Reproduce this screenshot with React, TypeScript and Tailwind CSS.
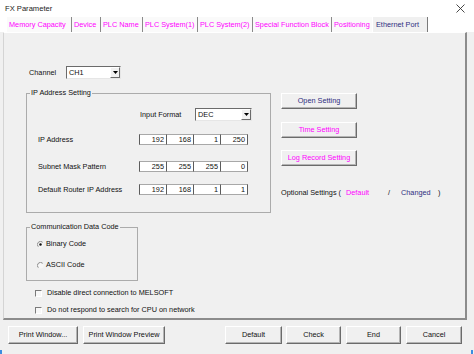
import React from "react";

type Kids = { children?: React.ReactNode; className?: string };

const Btn = ({ children, className = "" }: Kids) => (
  <div
    className={`flex items-center justify-center border border-t-white border-l-white border-r-[#6b6b6b] border-b-[#6b6b6b] bg-[#f0f0f0] leading-[10px] shadow-[inset_-1px_-1px_0_#b4b4b4] ${className}`}
  >
    {children}
  </div>
);

const Combo = ({ value, className = "" }: { value: string; className?: string }) => (
  <div
    className={`flex h-[13px] items-stretch border border-t-[#6b6b6b] border-l-[#6b6b6b] border-r-[#e6e6e6] border-b-[#e6e6e6] bg-white ${className}`}
  >
    <span className="flex-1 pl-[2px] leading-[11px]">{value}</span>
    <span className="flex w-[10px] items-center justify-center border border-t-white border-l-white border-r-[#6b6b6b] border-b-[#6b6b6b] bg-[#f0f0f0]">
      <svg width="5" height="3" viewBox="0 0 5 3">
        <path d="M0 0h5L2.5 3z" fill="#000" />
      </svg>
    </span>
  </div>
);

const IpField = ({ label, parts }: { label: string; parts: string[] }) => (
  <div className="flex h-[11px] items-center pl-[11px]">
    <span className="w-[101px] leading-[10px]">{label}</span>
    <div className="flex">
      {parts.map((p, i) => (
        <span
          key={i}
          className="-ml-px h-[11px] w-[28px] border border-t-[#a8a8a8] border-b-[#a8a8a8] border-l-[#5c5c5c] border-r-[#5c5c5c] bg-white pr-[2px] text-right leading-[9px] first:ml-0"
        >
          {p}
        </span>
      ))}
    </div>
  </div>
);

const Radio = ({ checked, label }: { checked?: boolean; label: string }) => (
  <div className="flex h-[10px] items-center gap-[2px] pl-[10px]">
    <svg width="7" height="7" viewBox="0 0 8 8">
      <circle cx="4" cy="4" r="3.5" fill="#f7f7f7" />
      <path d="M1.5 6.5A3.5 3.5 0 0 1 6.5 1.5" fill="none" stroke="#7a7a7a" strokeWidth="1" />
      {checked && <circle cx="4" cy="4" r="1.4" fill="#111" />}
    </svg>
    <span className="leading-[10px]">{label}</span>
  </div>
);

const Check = ({ label, className = "" }: { label: string; className?: string }) => (
  <div className={`flex h-[10px] items-center gap-[5px] pl-[9px] ${className}`}>
    <span className="h-[7px] w-[7px] border border-t-[#7a7a7a] border-l-[#7a7a7a] border-r-white border-b-white bg-[#f7f7f7]" />
    <span className="leading-[10px]">{label}</span>
  </div>
);

const tabs = [
  { label: "Memory Capacity", w: "w-[65px]" },
  { label: "Device", w: "w-[29px]" },
  { label: "PLC Name", w: "w-[42px]" },
  { label: "PLC System(1)", w: "w-[55px]" },
  { label: "PLC System(2)", w: "w-[55px]" },
  { label: "Special Function Block", w: "w-[79px]" },
];

export default function App() {
  return (
    <div className="flex h-[354px] w-[474px] flex-col overflow-hidden bg-[#f0f0f0] font-['Liberation_Sans',Arial,sans-serif] text-[7.3px] text-[#111]">
      {/* title bar */}
      <div className="flex h-[17px] items-center justify-between bg-white pl-[5px] pr-[9px]">
        <span className="text-[7.6px] leading-[10px] text-[#222]">FX Parameter</span>
        <svg width="9" height="9" viewBox="0 0 9 9">
          <path d="M0.5 0.5l8 8M8.5 0.5l-8 8" stroke="#333" strokeWidth="0.9" />
        </svg>
      </div>

      {/* tab strip */}
      <div className="flex h-[15px] bg-white pl-[7px]">
        {tabs.map((t) => (
          <div
            key={t.label}
            className={`flex shrink-0 items-center whitespace-nowrap border-r border-r-[#8a8a8a] bg-[#fafafa] pl-[2px] leading-[10px] text-[#f0f] ${t.w}`}
          >
            {t.label}
          </div>
        ))}
        <div className="flex w-[40px] shrink-0 items-center bg-[#fafafa] pl-[2px] leading-[10px] text-[#f0f]">
          Positioning
        </div>
        <div className="flex w-[56px] shrink-0 items-center border-l border-r border-l-white border-r-[#7a7a7a] bg-[#f0f0f0] pl-[3px] leading-[10px] text-[#2e2e80]">
          Ethernet Port
        </div>
      </div>

      {/* tab page */}
      <div className="ml-[3px] h-[288px] w-[464px] border-t border-l border-r-2 border-b-2 border-t-white border-l-[#d4d4d4] border-r-[#8c8c8c] border-b-[#8c8c8c]">
        <div className="mt-[33px] flex h-[13px] items-center pl-[25px]">
          <span className="w-[37px] leading-[10px]">Channel</span>
          <Combo value="CH1" className="w-[55px]" />
        </div>

        <div className="mt-[9px] flex pl-[22px]">
          {/* left column */}
          <div className="flex w-[245px] flex-col">
            <fieldset className="h-[125px] border border-[#ababab]">
              <legend className="ml-[3px] px-[1px] leading-[10px]">IP Address Setting</legend>
              <div className="mt-[10px] flex h-[13px] items-center pl-[113px]">
                <span className="w-[55px] leading-[10px]">Input Format</span>
                <Combo value="DEC" className="w-[57px]" />
              </div>
              <div className="mt-[13px]">
                <IpField label="IP Address" parts={["192", "168", "1", "250"]} />
              </div>
              <div className="mt-[16px]">
                <IpField label="Subnet Mask Pattern" parts={["255", "255", "255", "0"]} />
              </div>
              <div className="mt-[12px]">
                <IpField label="Default Router IP Address" parts={["192", "168", "1", "1"]} />
              </div>
            </fieldset>

            <fieldset className="mt-[9px] h-[59px] w-[112px] border border-[#ababab]">
              <legend className="ml-[3px] px-[1px] leading-[10px]">Communication Data Code</legend>
              <div className="mt-[7px]">
                <Radio checked label="Binary Code" />
              </div>
              <div className="mt-[11px]">
                <Radio label="ASCII Code" />
              </div>
            </fieldset>

            <Check label="Disable direct connection to MELSOFT" className="mt-[7px]" />
            <Check label="Do not respond to search for CPU on network" className="mt-[7px]" />
          </div>

          {/* right column */}
          <div className="ml-[10px] flex flex-col">
            <Btn className="mt-[5px] h-[16px] w-[76px] text-[#2e2e80]">Open Setting</Btn>
            <Btn className="mt-[13px] h-[16px] w-[76px] text-[#f0f]">Time Setting</Btn>
            <Btn className="mt-[12px] h-[16px] w-[76px] text-[#f0f]">Log Record Setting</Btn>
            <div className="mt-[22px] flex h-[10px] items-center leading-[10px] whitespace-nowrap">
              <span className="w-[65px]">Optional Settings (</span>
              <span className="w-[42px] text-[#f0f]">Default</span>
              <span className="w-[13px]">/</span>
              <span className="w-[37px] text-[#2e2e80]">Changed</span>
              <span>)</span>
            </div>
          </div>
        </div>
      </div>

      {/* bottom buttons */}
      <div className="mt-[6px] flex h-[18px] pl-[8px]">
        <Btn className="w-[70px]">Print Window...</Btn>
        <Btn className="ml-[5px] w-[82px]">Print Window Preview</Btn>
        <Btn className="ml-[60px] w-[57px]">Default</Btn>
        <Btn className="ml-[4px] w-[55px]">Check</Btn>
        <Btn className="ml-[5px] w-[55px]">End</Btn>
        <Btn className="ml-[5px] w-[56px]">Cancel</Btn>
      </div>

      {/* window frame edge marks */}
      <div className="mt-auto flex h-[4px] justify-between pr-[1px]">
        <span className="w-[2px] bg-[#3c8ce0]" />
        <span className="w-[2px] bg-[#3c8ce0]" />
      </div>
    </div>
  );
}
